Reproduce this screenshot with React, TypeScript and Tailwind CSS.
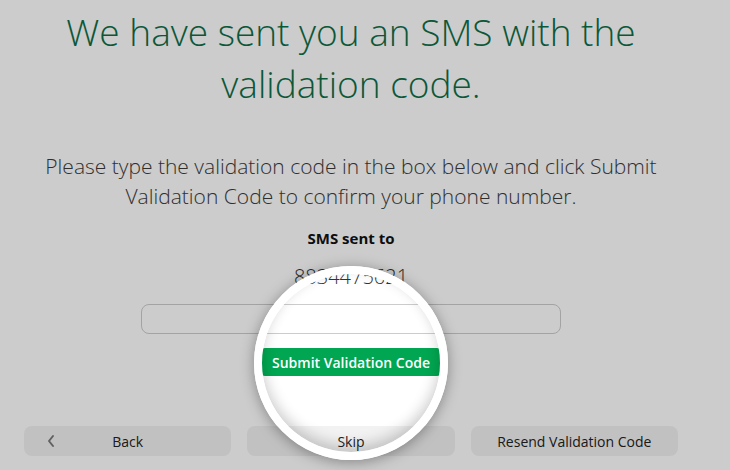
import React from "react";

function ChevronLeft() {
  return (
    <svg width="10" height="14" viewBox="0 0 10 14" fill="none">
      <polyline points="7,2 3,7 7,12" stroke="#7a7a7a" strokeWidth="2" strokeLinecap="round" strokeLinejoin="round" />
    </svg>
  );
}

export default function App() {
  const phone = "8834475621";

  return (
    <div className="relative w-[730px] h-[470px] overflow-hidden bg-white font-['Open_Sans',sans-serif]">
      <main className="w-[702px] flex flex-col items-center">
        <h1 className="mt-[6px] text-center text-[37px] leading-[52px] font-light text-[#0d6e47]">
          We have sent you an SMS with the
          <br />
          validation code.
        </h1>

        <p className="mt-[41px] text-center text-[21px] leading-[30px] font-light text-[#3b3b3b]">
          Please type the validation code in the box below and click Submit
          <br />
          Validation Code to confirm your phone number.
        </p>

        <div className="mt-[17px] text-[15px] leading-[20px] font-bold text-[#111]">SMS sent to</div>
        <div className="mt-[14px] text-[20px] leading-[30px] font-light text-[#333]">{phone}</div>

        <input
          type="text"
          className="mt-[12px] h-[30px] w-[420px] rounded-[8px] border border-[#cccccc] bg-white px-3 outline-none"
        />

        <button className="mt-[14px] h-[28px] px-[10px] rounded-[3px] bg-[#00a651] text-white text-[14px] font-semibold">
          Submit Validation Code
        </button>

        {/* footer actions */}
        <div className="mt-[50px] w-full px-[24px] grid grid-cols-3 gap-4">
          <button className="relative h-[30px] rounded-[8px] bg-[#f2f2f2] text-[14px] text-[#222]">
            <span className="absolute left-[22px] top-[8px]">
              <ChevronLeft />
            </span>
            Back
          </button>
          <button className="h-[30px] rounded-[8px] bg-[#f2f2f2] text-[14px] text-[#222]">Skip</button>
          <button className="h-[30px] rounded-[8px] bg-[#f2f2f2] text-[14px] text-[#222]">Resend Validation Code</button>
        </div>
      </main>

      {/* spotlight over the submit button */}
      <div className="pointer-events-none absolute left-[254px] top-[266px] w-[194px] h-[194px] rounded-full border-8 border-white shadow-[0_0_0_9999px_rgba(0,0,0,0.2),0_2px_14px_rgba(0,0,0,0.35),inset_0_-6px_14px_rgba(0,0,0,0.2)]" />
    </div>
  );
}
